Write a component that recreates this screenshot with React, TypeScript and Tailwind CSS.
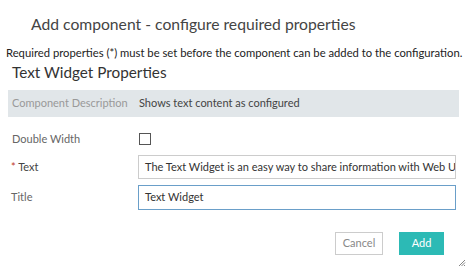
export default function App() {
  return (
    <div className="h-[274px] w-[474px] overflow-hidden bg-white text-[#333] font-['Lato',sans-serif]">
      <h1 className="pl-[31px] pt-[12px] text-[15.7px] leading-[24px] text-[#444]">
        Add component - configure required properties
      </h1>
      <p className="mt-[10px] pl-[6px] text-[11.25px] leading-[14px] text-[#222]">
        Required properties (*) must be set before the component can be added to the configuration.
      </p>
      <h2 className="mt-[2px] pl-[12px] text-[15.3px] leading-[20px] text-[#333]">Text Widget Properties</h2>

      <div className="ml-[8px] mt-[8px] flex h-[27px] w-[451px] items-center bg-[#e1e6e9] text-[11px]">
        <span className="w-[131px] pl-[4px] text-[#999]">Component Description</span>
        <span className="text-[#444]">Shows text content as configured</span>
      </div>

      <div className="mt-[16px] flex h-[12px] items-center pl-[12px] text-[11px] text-[#666]">
        <span className="w-[127px]">Double Width</span>
        <span className="h-[12px] w-[12px] border border-[#555] bg-white" />
      </div>

      <div className="mt-[10px] flex items-center pl-[11px] text-[11px] text-[#444]">
        <span className="w-[127px]">
          <span className="text-[#c0392b]">*</span> Text
        </span>
        <div className="flex h-[24px] w-[318px] items-center overflow-hidden whitespace-nowrap border border-[#ccc] bg-white px-[6px] text-[11px] text-[#333]">
          The Text Widget is an easy way to share information with Web U
        </div>
      </div>

      <div className="mt-[6px] flex items-center pl-[11px] text-[11px] text-[#666]">
        <span className="w-[127px]">Title</span>
        <div className="flex h-[25px] w-[318px] items-center border border-[#6a9fc9] bg-white px-[6px] text-[11px] text-[#333]">
          Text Widget
        </div>
      </div>

      <div className="mt-[22px] flex justify-end gap-[16px] pr-[30px]">
        <button className="h-[23px] w-[48px] border border-[#ccc] bg-white text-[11px] text-[#888]">
          Cancel
        </button>
        <button className="h-[23px] w-[45px] bg-[#2cbab5] text-[11px] text-white">Add</button>
      </div>

      <div className="flex justify-end pr-[8px]">
        <svg width="8" height="8" viewBox="0 0 8 8" className="mt-[4px]">
          <path d="M7 1L1 7M7 3.5L3.5 7M7 6L6 7" stroke="#777" strokeWidth="0.9" />
        </svg>
      </div>
    </div>
  );
}
